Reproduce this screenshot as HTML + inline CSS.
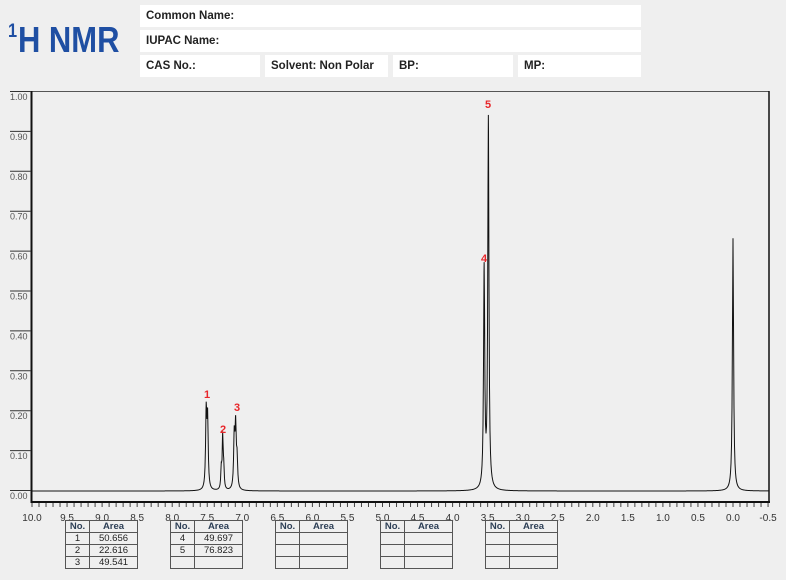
<!DOCTYPE html>
<html><head><meta charset="utf-8">
<style>
*{margin:0;padding:0;box-sizing:border-box}
body{width:786px;height:580px;background:#efefef;font-family:"Liberation Sans",sans-serif;position:relative;overflow:hidden}
.title{position:absolute;left:8px;top:12px;color:#1f4fa3;font-size:36px;font-weight:bold;transform:scaleX(0.86);transform-origin:left;line-height:40px;white-space:nowrap}
.title span{font-size:19px;vertical-align:15px;margin-right:1px}
.box{position:absolute;background:#fff;height:22px;font-size:11.5px;font-weight:bold;color:#222;padding:5px 0 0 6px;font-family:"Liberation Sans Narrow","Liberation Sans",sans-serif}
svg{position:absolute;left:0;top:0}
table{position:absolute;border-collapse:collapse;font-family:"Liberation Sans Narrow","Liberation Sans",sans-serif;font-size:9.5px;color:#222}
td{border:1px solid #555;height:12px;text-align:center;line-height:10px;padding:0}
td.a{width:24px}td.b{width:48px}
tr.h td{font-weight:bold;color:#2c3e55}
</style></head><body>
<div class="title"><span>1</span>H NMR</div>
<div class="box" style="left:140px;top:5px;width:501px">Common Name:</div>
<div class="box" style="left:140px;top:30px;width:501px">IUPAC Name:</div>
<div class="box" style="left:140px;top:55px;width:120px">CAS No.:</div>
<div class="box" style="left:265px;top:55px;width:123px">Solvent: Non Polar</div>
<div class="box" style="left:393px;top:55px;width:120px">BP:</div>
<div class="box" style="left:518px;top:55px;width:123px">MP:</div>
<svg id="s" width="786" height="580" xmlns="http://www.w3.org/2000/svg">
<line x1="31" y1="91.5" x2="769" y2="91.5" stroke="#555" stroke-width="1"/>
<line x1="769" y1="91" x2="769" y2="503" stroke="#111" stroke-width="1.5"/>
<line x1="31.5" y1="91" x2="31.5" y2="503" stroke="#111" stroke-width="2"/>
<line x1="31" y1="502" x2="770" y2="502" stroke="#111" stroke-width="2"/>
<g id="yl" font-size="9" fill="#555" font-family="Liberation Sans,sans-serif"></g>
<g id="xl" font-size="10" fill="#333" font-family="Liberation Sans,sans-serif" text-anchor="middle"></g>
<path id="sp" fill="none" stroke="#111" stroke-width="1"/>
<g fill="#e8262a" font-size="11" font-weight="bold" text-anchor="middle" font-family="Liberation Sans,sans-serif">
<text x="207" y="398">1</text><text x="223" y="433">2</text><text x="237" y="411">3</text><text x="484" y="262">4</text><text x="488" y="108">5</text>
</g>
</svg>
<table style="left:65px;top:520px"><tr class="h"><td class="a">No.</td><td class="b">Area</td></tr><tr><td>1</td><td>50.656</td></tr><tr><td>2</td><td>22.616</td></tr><tr><td>3</td><td>49.541</td></tr></table>
<table style="left:170px;top:520px"><tr class="h"><td class="a">No.</td><td class="b">Area</td></tr><tr><td>4</td><td>49.697</td></tr><tr><td>5</td><td>76.823</td></tr><tr><td></td><td></td></tr></table>
<table style="left:275px;top:520px"><tr class="h"><td class="a">No.</td><td class="b">Area</td></tr><tr><td></td><td></td></tr><tr><td></td><td></td></tr><tr><td></td><td></td></tr></table>
<table style="left:380px;top:520px"><tr class="h"><td class="a">No.</td><td class="b">Area</td></tr><tr><td></td><td></td></tr><tr><td></td><td></td></tr><tr><td></td><td></td></tr></table>
<table style="left:485px;top:520px"><tr class="h"><td class="a">No.</td><td class="b">Area</td></tr><tr><td></td><td></td></tr><tr><td></td><td></td></tr><tr><td></td><td></td></tr></table>
<script>
var NS="http://www.w3.org/2000/svg";
function X(p){return 32+(10-p)*70.1;}
function Y(v){return 491-v*398;}
var yl=document.getElementById('yl'),xl=document.getElementById('xl'),s=document.getElementById('s');
for(var i=0;i<=10;i++){var y=91+i*39.9;
var l=document.createElementNS(NS,'line');l.setAttribute('x1',10);l.setAttribute('x2',31);l.setAttribute('y1',y+0.5);l.setAttribute('y2',y+0.5);l.setAttribute('stroke','#333');s.insertBefore(l,yl);
var t=document.createElementNS(NS,'text');t.setAttribute('x',10);t.setAttribute('y',y+9);t.textContent=((10-i)/10).toFixed(2);yl.appendChild(t);}
for(var k=0;k<=105;k++){var p=10-k*0.1,x=X(p);
var l=document.createElementNS(NS,'line');l.setAttribute('x1',x);l.setAttribute('x2',x);l.setAttribute('y1',503);l.setAttribute('y2',507);l.setAttribute('stroke','#444');s.insertBefore(l,yl);
if(k%5==0){var t=document.createElementNS(NS,'text');t.setAttribute('x',x);t.setAttribute('y',521);t.textContent=p.toFixed(1).replace('-0.0','0.0');xl.appendChild(t);}}
var pk=[[7.515,0.19,0.01],[7.495,0.17,0.01],[7.30,0.05,0.008],[7.28,0.13,0.008],[7.265,0.05,0.008],[7.115,0.13,0.01],[7.095,0.15,0.01],[7.075,0.07,0.01],[3.55,0.55,0.01],[3.49,0.93,0.01],[0.0,0.635,0.01]];
var xs=[];for(var x=32;x<=769;x+=0.5)xs.push(x);
pk.forEach(function(q){xs.push(X(q[0]));});xs.sort(function(a,b){return a-b;});
var d='';xs.forEach(function(x){var p=10-(x-32)/70.1,v=0;for(var j=0;j<pk.length;j++){var q=(p-pk[j][0])/pk[j][2];v+=pk[j][1]/(1+q*q);}
d+=(d?'L':'M')+x.toFixed(2)+' '+Y(v).toFixed(2);});
document.getElementById('sp').setAttribute('d',d);
</script>
</body></html>
